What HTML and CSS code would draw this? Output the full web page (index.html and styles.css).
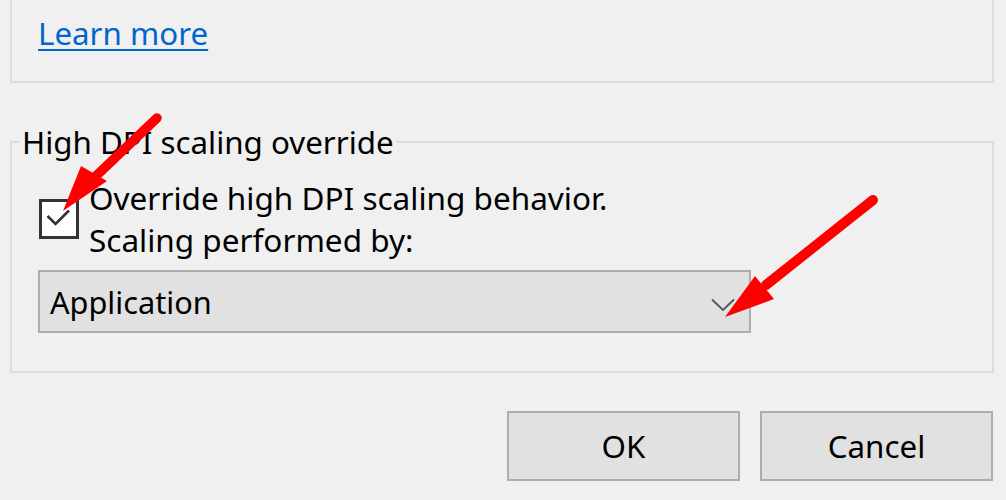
FILE: index.html
```html
<!DOCTYPE html>
<html lang="en">
<head>
<meta charset="utf-8">
<title>High DPI scaling override</title>
<link rel="stylesheet" href="styles.css">
</head>
<body>
<div class="page">
  <div class="info">
    <a class="link" href="#">Learn more</a>
  </div>

  <fieldset class="group">
    <legend class="legend">High DPI scaling override</legend>
    <div class="check-row">
      <span class="checkbox">
        <svg width="34" height="34" viewBox="0 0 34 34"><polyline points="5.5,14 13.5,22 27,8.5" fill="none" stroke="#333" stroke-width="2.6"/></svg>
      </span>
      <div class="check-text">
        <div>Override high DPI scaling behavior.</div>
        <div>Scaling performed by:</div>
      </div>
    </div>
    <div class="select">
      <span class="select-value">Application</span>
      <svg class="chevron" width="24" height="14" viewBox="0 0 24 14"><polyline points="1,1.5 12,12 23,1.5" fill="none" stroke="#555" stroke-width="1.8"/></svg>
    </div>
  </fieldset>

  <div class="buttons">
    <button class="btn">OK</button>
    <button class="btn">Cancel</button>
  </div>
</div>

<svg class="annotations" width="1006" height="500" viewBox="0 0 1006 500">
  <line x1="157" y1="118" x2="96" y2="176" stroke="#ff0000" stroke-width="9.5" stroke-linecap="round"/>
  <polygon points="63,211 81,166 107,181" fill="#ff0000"/>
  <line x1="873" y1="200" x2="766" y2="285" stroke="#ff0000" stroke-width="10" stroke-linecap="round"/>
  <polygon points="725,317 755,276 774,299" fill="#ff0000"/>
</svg>
</body>
</html>
```

FILE: styles.css
```css
html, body {
  margin: 0;
  padding: 0;
}

body {
  width: 1006px;
  height: 500px;
  overflow: hidden;
  position: relative;
  background: #f0f0f0;
  color: #000;
  font-family: "Noto Sans", "Open Sans", sans-serif;
}

.page {
  padding: 0 12px 0 10px;
}

.info {
  height: 81px;
  border: 2px solid #dcdcdc;
  border-top: none;
  padding-left: 26px;
  box-sizing: content-box;
}

.link {
  display: inline-block;
  margin-top: 12px;
  font-size: 31.3px;
  line-height: 42px;
  color: #0066cc;
  text-decoration: underline;
  text-decoration-thickness: 2px;
  text-underline-offset: 4px;
}

.group {
  margin: 44px 0 0 0;
  padding: 0 0 38px 26px;
  border: 2px solid #dcdcdc;
  min-width: 0;
}

.legend {
  margin-left: -18px;
  padding: 0 2px;
  font-size: 31.3px;
  line-height: 30px;
}

.check-row {
  display: flex;
  align-items: flex-start;
  margin-top: 20px;
}

.checkbox {
  box-sizing: border-box;
  flex: none;
  width: 40px;
  height: 40px;
  margin-top: 22px;
  margin-left: 1px;
  border: 3px solid #333;
  background: #fff;
  display: flex;
}

.check-text {
  margin-left: 10px;
  font-size: 31.5px;
  line-height: 42px;
}

.select {
  box-sizing: border-box;
  width: 713px;
  height: 63px;
  margin-top: 9px;
  background: #e1e1e1;
  border: 2px solid #adadad;
  display: flex;
  align-items: center;
  justify-content: space-between;
  padding: 0 14px 0 10px;
}

.select-value {
  font-size: 30.7px;
  line-height: 40px;
}

.chevron {
  display: block;
  margin-top: 6px;
}

.buttons {
  display: flex;
  justify-content: flex-end;
  gap: 20px;
  margin-top: 38px;
  padding-right: 1px;
}

.btn {
  box-sizing: border-box;
  width: 233px;
  height: 70px;
  background: #e1e1e1;
  border: 2px solid #adadad;
  font-family: inherit;
  font-size: 31.3px;
  color: #000;
  padding: 0;
}

.annotations {
  position: absolute;
  left: 0;
  top: 0;
  pointer-events: none;
}
```
